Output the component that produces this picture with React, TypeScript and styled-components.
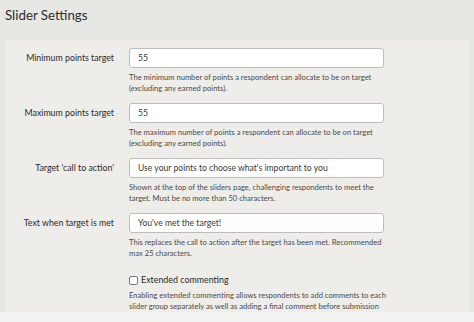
import React from "react";
import styled, { createGlobalStyle } from "styled-components";

const GlobalStyle = createGlobalStyle`
  html, body { margin: 0; padding: 0; }
  body {
    background: #e7e7e3;
    font-family: Lato, "Open Sans", sans-serif;
    color: #333;
    width: 474px;
    height: 322px;
    overflow: hidden;
  }
`;

const Page = styled.div`
  display: flex;
  flex-direction: column;
  height: 322px;
  padding: 0 5px;
  box-sizing: border-box;
`;

const Title = styled.h2`
  margin: 0;
  height: 40px;
  flex: none;
  font-size: 13.3px;
  font-weight: 400;
  line-height: 30px;
  color: #2e2e2e;
`;

const Panel = styled.div`
  background: #eeede9;
  padding: 8px 0 0 0;
  display: flex;
  flex-direction: column;
  gap: 9px;
  flex: none;
`;

const Footer = styled.div`
  flex: 1;
  margin: 0 -5px;
  background: #f3f3f1;
`;

const Row = styled.div`
  display: grid;
  grid-template-columns: 109px 262px;
  column-gap: 15px;
  align-items: start;
`;

const Label = styled.label`
  text-align: right;
  font-size: 8.8px;
  line-height: 20px;
  color: #2b2b2b;
`;

const Field = styled.div`
  display: flex;
  flex-direction: column;
  gap: 4px;
`;

const Input = styled.input`
  box-sizing: border-box;
  height: 20px;
  width: 255px;
  margin: 0;
  border: 1px solid #bdbdbd;
  border-radius: 3px;
  background: #fff;
  padding: 0 8px;
  font-family: Lato, sans-serif;
  font-size: 8.6px;
  color: #3a3a3a;
  outline: none;
`;

const Help = styled.div`
  font-size: 7.6px;
  line-height: 11px;
  color: #4a4a4a;
`;

const CheckField = styled(Field)`
  padding-top: 4px;
  gap: 2px;
`;

const CheckLine = styled.label`
  display: flex;
  align-items: center;
  gap: 3px;
  font-size: 8.9px;
  line-height: 16px;
  color: #2b2b2b;
`;

const Box = styled.span`
  box-sizing: border-box;
  width: 9px;
  height: 9px;
  border: 1px solid #777;
  border-radius: 2px;
  background: #fff;
`;

const fields = [
  {
    label: "Minimum points target",
    value: "55",
    help: "The minimum number of points a respondent can allocate to be on target (excluding any earned points).",
  },
  {
    label: "Maximum points target",
    value: "55",
    help: "The maximum number of points a respondent can allocate to be on target (excluding any earned points).",
  },
  {
    label: "Target 'call to action'",
    value: "Use your points to choose what's important to you",
    help: "Shown at the top of the sliders page, challenging respondents to meet the target. Must be no more than 50 characters.",
  },
  {
    label: "Text when target is met",
    value: "You've met the target!",
    help: "This replaces the call to action after the target has been met. Recommended max 25 characters.",
  },
];

export default function App() {
  return (
    <Page>
      <GlobalStyle />
      <Title>Slider Settings</Title>
      <Panel>
        {fields.map((f) => (
          <Row key={f.label}>
            <Label>{f.label}</Label>
            <Field>
              <Input defaultValue={f.value} />
              <Help>{f.help}</Help>
            </Field>
          </Row>
        ))}
        <Row>
          <span />
          <CheckField>
            <CheckLine>
              <Box />
              Extended commenting
            </CheckLine>
            <Help>
              Enabling extended commenting allows respondents to add comments to each slider group
              separately as well as adding a final comment before submission
            </Help>
          </CheckField>
        </Row>
      </Panel>
      <Footer />
    </Page>
  );
}
